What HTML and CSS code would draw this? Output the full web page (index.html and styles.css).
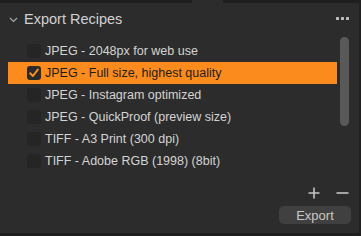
FILE: index.html
```html
<!DOCTYPE html>
<html>
<head>
<meta charset="utf-8">
<link rel="stylesheet" href="styles.css">
</head>
<body>
<div class="frame">
  <div class="topbar"><div class="tab"></div></div>
  <div class="panel">
    <div class="header">
      <svg class="chev" width="9" height="6" viewBox="0 0 9 6"><path d="M1 1 L4.5 4.5 L8 1" fill="none" stroke="#a8a8a8" stroke-width="1.2"/></svg>
      <span class="title">Export Recipes</span>
      <span class="more"><i></i><i></i><i></i></span>
    </div>
    <div class="listwrap">
      <ul class="list">
        <li class="row"><span class="box"></span><span class="label">JPEG - 2048px for web use</span></li>
        <li class="row sel"><span class="box checked"><svg width="12" height="12" viewBox="0 0 12 12"><path d="M2.2 6.3 L4.9 9 L9.8 2.6" fill="none" stroke="#f7901e" stroke-width="2" stroke-linecap="round" stroke-linejoin="round"/></svg></span><span class="label">JPEG - Full size, highest quality</span></li>
        <li class="row"><span class="box"></span><span class="label">JPEG - Instagram optimized</span></li>
        <li class="row"><span class="box"></span><span class="label">JPEG - QuickProof (preview size)</span></li>
        <li class="row"><span class="box"></span><span class="label">TIFF - A3 Print (300 dpi)</span></li>
        <li class="row"><span class="box"></span><span class="label">TIFF - Adobe RGB (1998) (8bit)</span></li>
      </ul>
      <div class="scroll"></div>
    </div>
    <div class="tools">
      <svg width="12" height="12" viewBox="0 0 12 12"><path d="M6 0.5 V11.5 M0.5 6 H11.5" stroke="#c4c4c4" stroke-width="1.6"/></svg>
      <svg width="13" height="12" viewBox="0 0 13 12"><path d="M0.5 6 H12.5" stroke="#c4c4c4" stroke-width="1.6"/></svg>
    </div>
    <div class="actions">
      <button class="export">Export</button>
    </div>
  </div>
  <div class="bottombar"></div>
</div>
</body>
</html>
```

FILE: styles.css
```css
html, body {
  margin: 0;
  padding: 0;
  background: #2c2c2c;
}
.frame {
  width: 361px;
  height: 236px;
  display: flex;
  flex-direction: column;
  overflow: hidden;
  font-family: "Liberation Sans", Arial, sans-serif;
  color: #d4d4d4;
  border-right: 2px solid #202020;
  box-sizing: border-box;
}
.topbar {
  height: 3px;
  background: #1f1f1f;
  flex: none;
}
.tab {
  margin-left: 192px;
  width: 31px;
  height: 3px;
  background: #2c2c2c;
}
.panel {
  flex: 1;
  display: flex;
  flex-direction: column;
}
.header {
  height: 37px;
  display: flex;
  align-items: center;
  padding: 0 0 5px 9px;
  box-sizing: border-box;
}
.chev { margin-right: 6px; margin-top: 2px; }
.title {
  font-size: 14.5px;
  color: #d2d2d2;
}
.more {
  margin-left: auto;
  margin-right: 10px;
  display: flex;
  gap: 2px;
  margin-top: -1px;
}
.more i {
  display: block;
  width: 3px;
  height: 3px;
  background: #bdbdbd;
  border-radius: 0.5px;
}
.listwrap {
  position: relative;
  height: 138px;
}
.list {
  list-style: none;
  margin: 0;
  padding: 0 0 0 8px;
  width: 329px;
}
.row {
  height: 22px;
  display: flex;
  align-items: center;
  padding-left: 19px;
  font-size: 12.5px;
}
.row.sel {
  background: #fb8b1c;
  color: #1c1c1c;
}
.box {
  width: 14px;
  height: 14px;
  border-radius: 3px;
  background: #252525;
  margin-right: 4px;
  flex: none;
  display: flex;
  align-items: center;
  justify-content: center;
}
.box.checked { background: #2a2a2a; }
.label { white-space: nowrap; }
.scroll {
  position: absolute;
  left: 340px;
  top: -3px;
  width: 9px;
  height: 89px;
  border-radius: 5px;
  background: #595959;
}
.tools {
  display: flex;
  justify-content: flex-end;
  gap: 16px;
  padding: 9px 10px 0 0;
  height: 20px;
  box-sizing: content-box;
}
.actions {
  display: flex;
  justify-content: flex-end;
  padding: 0 8px 0 0;
  margin-top: -1px;
}
.export {
  width: 72px;
  height: 18px;
  border: none;
  border-radius: 5px;
  background: #404040;
  color: #c8c8c8;
  font-family: "Liberation Sans", Arial, sans-serif;
  font-size: 13px;
  padding: 0;
}
.bottombar {
  height: 3px;
  background: #1f1f1f;
  flex: none;
}
```
